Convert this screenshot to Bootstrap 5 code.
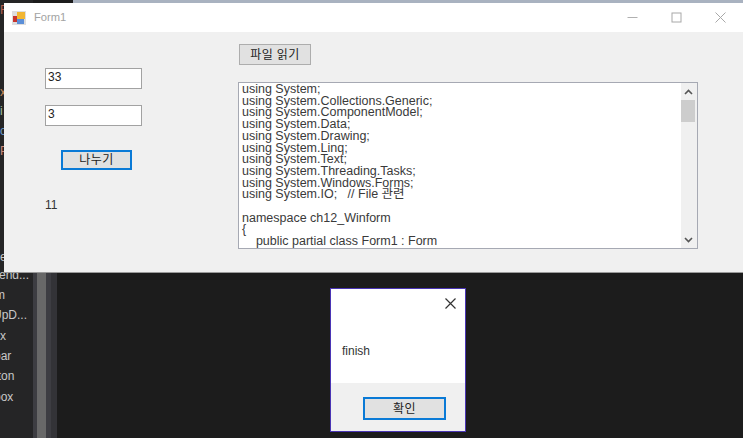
<!DOCTYPE html>
<html lang="ko">
<head>
<meta charset="utf-8">
<title>Form1</title>
<link rel="stylesheet" href="https://cdn.jsdelivr.net/npm/bootstrap@5.3.0/dist/css/bootstrap.min.css">
<style>
html,body{margin:0;height:100%;overflow:hidden}
body{background:#1c1c1c;font-family:"Liberation Sans","Noto Sans CJK KR",sans-serif;font-size:12px;color:#222}
.desk{position:relative;width:743px;height:438px;overflow:hidden;background:#1c1c1c}
.topline{position:absolute;left:73px;right:0;top:0;height:3px;background:#a9b2c0}
.sidebar{position:absolute;left:0;top:0;width:33px;height:438px;background:#252526}
.side-item{position:absolute;left:0;color:#c8c8c8;font-size:12px;line-height:14px;white-space:nowrap}
.side-tick{position:absolute;left:0;font-size:12px;line-height:14px}
.rail{position:absolute;top:272px;bottom:0}
.form-win{position:absolute;left:4px;top:3px;width:739px;height:270px;background:#f0f0f0;border-bottom:1px solid #9a9a9a}
.titlebar{height:29px;background:#fff;color:#a3a3a3;font-size:11.2px;padding-left:8px}
.titlebar svg{display:block}
.winbtns{margin-left:auto;gap:33px;padding-right:17px}
.w-field{position:absolute;left:41px;width:97px;height:21px;background:#fff;border:1px solid #a2a2a2;padding:0 0 0 2px;line-height:16px;color:#222}
.w-btn{position:absolute;background:#e1e1e1;border:1px solid #adadad;color:#222;display:flex;align-items:center;justify-content:center;font-size:12px;letter-spacing:.4px;padding:0}
.w-btn.active-btn{border:2px solid #0a7ad6}
.w-label{position:absolute;left:41px;top:195px;line-height:14px;color:#333}
.codebox{position:absolute;left:234px;top:79px;width:460px;height:167px;background:#fff;border:1px solid #a6a9b3;overflow:hidden}
.codetext{margin:0;padding:1px 0 0 3px;font-family:"Liberation Sans","Noto Sans CJK KR",sans-serif;font-size:12.5px;line-height:11.7px;color:#3a3a3a;white-space:pre}
.sbar{position:absolute;right:0;top:0;bottom:0;width:16px;background:#f0f0f0}
.sthumb{position:absolute;left:0;right:2px;top:17px;height:22px;background:#cdcdcd}
.sarrow{position:absolute;left:3px}
.msgbox{position:absolute;left:330px;top:288px;width:136px;height:144px;background:#fff;border:1px solid #4a35b5}
.msgclose{position:absolute;left:114px;top:9px}
.msgtext{position:absolute;left:11px;top:55px;line-height:14px;color:#333}
.msgfoot{position:absolute;left:0;right:0;bottom:0;height:48px;background:#f0f0f0}
</style>
</head>
<body>
<div class="desk">
  <div class="topline"></div>
  <div class="sidebar">
    <div class="side-tick" style="top:3px;color:#b5604f">F</div>
    <div class="side-tick" style="top:85px;color:#c98a5a">x</div>
    <div class="side-tick" style="top:104px;color:#9fc0a0">i</div>
    <div class="side-tick" style="top:124px;color:#6f9fcf">o</div>
    <div class="side-tick" style="top:144px;color:#c98a7a">P</div>
    <div class="side-item" style="top:250px">e</div>
    <div class="side-item" style="top:268px;left:-7px">Ilend...</div>
    <div class="side-item" style="top:288px;left:-5px">m</div>
    <div class="side-item" style="top:308px;left:-7px">UpD...</div>
    <div class="side-item" style="top:329px">x</div>
    <div class="side-item" style="top:349px;left:-6px">bar</div>
    <div class="side-item" style="top:369px;left:-5px">iton</div>
    <div class="side-item" style="top:390px;left:-6px">box</div>
  </div>
  <div class="rail" style="left:33px;width:4px;background:#3d3d42"></div>
  <div class="rail" style="left:37px;width:9px;background:#686868"></div>
  <div class="rail" style="left:46px;width:5px;background:#3d3d42"></div>
  <div class="rail" style="left:51px;width:6px;background:#333337"></div>

  <div class="form-win">
    <div class="titlebar d-flex align-items-center">
      <svg width="14" height="14" viewBox="0 0 14 14">
        <rect x="0" y="0" width="14" height="14" fill="#dedede"/>
        <rect x="5" y="1" width="8" height="7" fill="#f2b632"/>
        <rect x="1" y="5" width="4" height="6" fill="#c8342e"/>
        <rect x="5" y="8" width="7" height="5" fill="#5b8fd8"/>
      </svg>
      <span class="ms-1 ps-1">Form1</span>
      <div class="winbtns d-flex align-items-center">
        <svg width="11" height="11" viewBox="0 0 11 11"><path d="M0.5 5.5H10.5" stroke="#b0b0b0" fill="none"/></svg>
        <svg width="11" height="11" viewBox="0 0 11 11"><rect x="1" y="1" width="9" height="9" stroke="#a8a8a8" fill="none"/></svg>
        <svg width="11" height="11" viewBox="0 0 11 11"><path d="M0.5 0.5L10.5 10.5M10.5 0.5L0.5 10.5" stroke="#a8a8a8" fill="none"/></svg>
      </div>
    </div>
    <div class="w-field" style="top:65px">33</div>
    <div class="w-field" style="top:102px">3</div>
    <div class="w-btn active-btn" style="left:57px;top:147px;width:71px;height:20px">나누기</div>
    <div class="w-label">11</div>
    <div class="w-btn" style="left:235px;top:41px;width:72px;height:21px">파일 읽기</div>
    <div class="codebox">
<pre class="codetext">using System;
using System.Collections.Generic;
using System.ComponentModel;
using System.Data;
using System.Drawing;
using System.Linq;
using System.Text;
using System.Threading.Tasks;
using System.Windows.Forms;
using System.IO;   // File 관련

namespace ch12_Winform
{
    public partial class Form1 : Form</pre>
      <div class="sbar">
        <svg class="sarrow" style="top:6px" width="9" height="6" viewBox="0 0 9 6"><path d="M1 5L4.5 1.5L8 5" stroke="#555" stroke-width="1.6" fill="none"/></svg>
        <div class="sthumb"></div>
        <svg class="sarrow" style="bottom:5px" width="9" height="6" viewBox="0 0 9 6"><path d="M1 1L4.5 4.5L8 1" stroke="#555" stroke-width="1.6" fill="none"/></svg>
      </div>
    </div>
  </div>

  <div class="msgbox">
    <svg class="msgclose" width="11" height="11" viewBox="0 0 11 11"><path d="M0.5 0.5L10.5 10.5M10.5 0.5L0.5 10.5" stroke="#333" stroke-width="1.2" fill="none"/></svg>
    <div class="msgtext">finish</div>
    <div class="msgfoot">
      <div class="w-btn active-btn" style="left:32px;top:14px;width:83px;height:23px">확인</div>
    </div>
  </div>
</div>
<script src="https://cdn.jsdelivr.net/npm/bootstrap@5.3.0/dist/js/bootstrap.bundle.min.js"></script>
</body>
</html>
